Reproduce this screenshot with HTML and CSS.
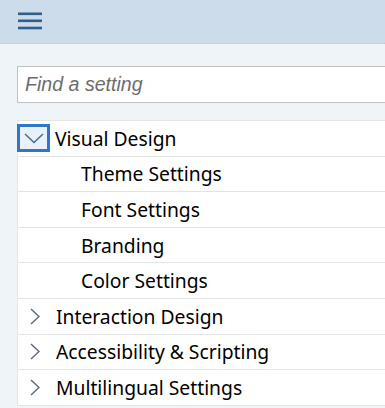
FILE: index.html
```html
<!DOCTYPE html>
<html>
<head>
<meta charset="utf-8">
<link rel="stylesheet" href="styles.css">
</head>
<body>
<header class="bar">
  <svg class="menu" width="24" height="18" viewBox="0 0 24 18"><rect x="0" y="0.5" width="24" height="2.6" fill="#2f5f8c"/><rect x="0" y="7.5" width="24" height="2.6" fill="#2f5f8c"/><rect x="0" y="14.7" width="24" height="2.6" fill="#2f5f8c"/></svg>
</header>
<main class="content">
  <div class="search">Find a setting</div>
  <ul class="tree">
    <li class="row top">
      <span class="expander open"><svg width="20" height="11" viewBox="0 0 20 11"><path d="M1 1 L10 9.5 L19 1" fill="none" stroke="#4a6a8a" stroke-width="1.5"/></svg></span>
      <span class="label">Visual Design</span>
    </li>
    <li class="row child"><span class="label">Theme Settings</span></li>
    <li class="row child"><span class="label">Font Settings</span></li>
    <li class="row child"><span class="label">Branding</span></li>
    <li class="row child"><span class="label">Color Settings</span></li>
    <li class="row top">
      <span class="expander"><svg width="10" height="17" viewBox="0 0 10 17"><path d="M1 1 L9 8.5 L1 16" fill="none" stroke="#5b6b7c" stroke-width="1.5"/></svg></span>
      <span class="label">Interaction Design</span>
    </li>
    <li class="row top">
      <span class="expander"><svg width="10" height="17" viewBox="0 0 10 17"><path d="M1 1 L9 8.5 L1 16" fill="none" stroke="#5b6b7c" stroke-width="1.5"/></svg></span>
      <span class="label">Accessibility &amp; Scripting</span>
    </li>
    <li class="row top">
      <span class="expander"><svg width="10" height="17" viewBox="0 0 10 17"><path d="M1 1 L9 8.5 L1 16" fill="none" stroke="#5b6b7c" stroke-width="1.5"/></svg></span>
      <span class="label">Multilingual Settings</span>
    </li>
  </ul>
</main>
</body>
</html>
```

FILE: styles.css
```css
html, body {
  margin: 0;
  padding: 0;
  height: 100%;
  overflow: hidden;
}
body {
  background: #eff4f9;
  font-family: "Noto Sans", "Open Sans", sans-serif;
  color: #000;
}
.bar {
  height: 43px;
  background: #cddcea;
  border-bottom: 1px dotted #b9c8d6;
  display: flex;
  align-items: center;
  padding-left: 18px;
}
.menu {
  display: block;
  margin-top: -2px;
}
.content {
  padding: 22px 0 0 17px;
}
.search {
  box-sizing: border-box;
  height: 37px;
  background: #fff;
  border: 1px solid #c2c2c2;
  border-right: none;
  font-family: "Liberation Sans", Arial, sans-serif;
  font-style: italic;
  font-size: 19.6px;
  color: #6a6d70;
  padding-left: 7px;
  display: flex;
  align-items: center;
}
.tree {
  list-style: none;
  margin: 17px 0 0 0;
  padding: 0;
  background: #fff;
  border-top: 1px solid #e5e5e5;
  border-left: 1px solid #e5e5e5;
}
.row {
  box-sizing: border-box;
  height: 35.6px;
  border-bottom: 1px solid #e3e3e3;
  display: flex;
  align-items: center;
  font-size: 19.3px;
}
.expander {
  width: 38px;
  display: flex;
  align-items: center;
  justify-content: center;
}
.top .expander:not(.open) {
  justify-content: flex-start;
  padding-left: 12px;
  box-sizing: border-box;
}
.expander.open {
  box-sizing: border-box;
  width: 33px;
  height: 28px;
  border: 3.5px solid #2f76c4;
  background: #e8f1fa;
  margin-right: 5px;
  margin-left: -1px;
}
.child .label {
  padding-left: 63px;
}
```
